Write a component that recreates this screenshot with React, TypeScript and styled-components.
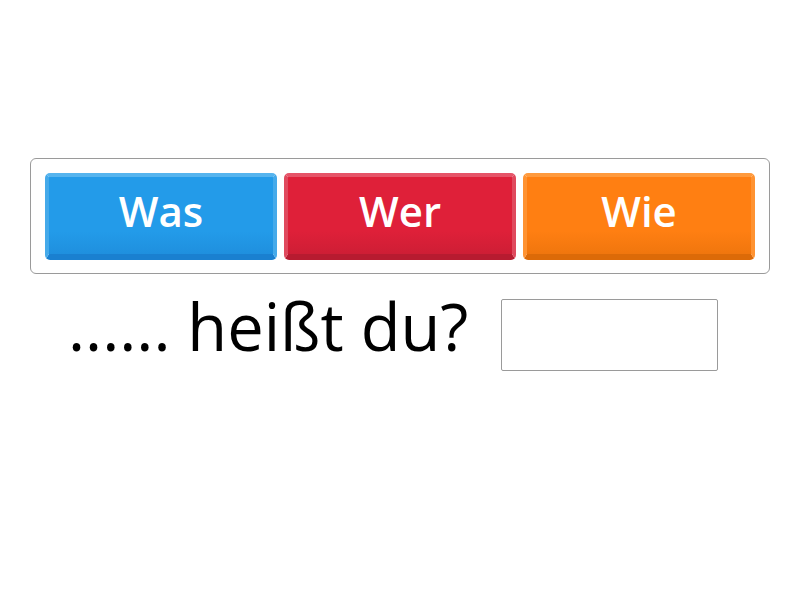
import styled, { createGlobalStyle } from "styled-components";

const GlobalStyle = createGlobalStyle`
  html, body {
    margin: 0;
    padding: 0;
    background: #ffffff;
  }
  body {
    font-family: "Open Sans", "Liberation Sans", sans-serif;
  }
`;

const Page = styled.div`
  width: 800px;
  height: 600px;
  display: flex;
  flex-direction: column;
  align-items: center;
  padding-top: 158px;
  box-sizing: border-box;
`;

const Tray = styled.div`
  width: 740px;
  height: 116px;
  box-sizing: border-box;
  border: 1px solid #9a9a9a;
  border-radius: 6px;
  padding: 14px 14px 13px;
  display: grid;
  grid-template-columns: repeat(3, 232px);
  gap: 7px;
`;

const palette = {
  blue: { top: "#56b4ee", main: "#239be9", bottom: "#1a80d0", edge: "#45aaea" },
  red: { top: "#e65468", main: "#df2039", bottom: "#b71b30", edge: "#e04a5e" },
  orange: { top: "#ff9a3d", main: "#ff7f12", bottom: "#dc6a08", edge: "#ff9332" },
};

type Tone = keyof typeof palette;

const Tile = styled.div<{ $tone: Tone }>`
  height: 87px;
  border-radius: 5px;
  box-sizing: border-box;
  background: linear-gradient(
    ${(p) => palette[p.$tone].main},
    ${(p) => palette[p.$tone].main} 70%,
    ${(p) => palette[p.$tone].bottom} 140%
  );
  border-top: 4px solid ${(p) => palette[p.$tone].top};
  border-left: 4px solid ${(p) => palette[p.$tone].edge};
  border-right: 4px solid ${(p) => palette[p.$tone].edge};
  border-bottom: 6px solid ${(p) => palette[p.$tone].bottom};
  display: flex;
  align-items: center;
  justify-content: center;
  color: #ffffff;
  font-size: 42px;
  font-weight: 600;
  padding-bottom: 11px;
`;

const Question = styled.div`
  width: 740px;
  margin-top: 25px;
  display: flex;
  align-items: flex-start;
  padding-left: 38px;
  box-sizing: border-box;
`;

const Sentence = styled.span`
  font-size: 65px;
  color: #000000;
  line-height: 54px;
  margin-right: 33px;
`;

const Blank = styled.div`
  width: 217px;
  height: 72px;
  box-sizing: border-box;
  border: 1px solid #9a9a9a;
  border-radius: 2px;
  background: #ffffff;
`;

const answers: { text: string; tone: Tone }[] = [
  { text: "Was", tone: "blue" },
  { text: "Wer", tone: "red" },
  { text: "Wie", tone: "orange" },
];

export default function App() {
  return (
    <>
      <GlobalStyle />
      <Page>
        <Tray>
          {answers.map((a) => (
            <Tile key={a.text} $tone={a.tone}>
              {a.text}
            </Tile>
          ))}
        </Tray>
        <Question>
          <Sentence>...... heißt du?</Sentence>
          <Blank />
        </Question>
      </Page>
    </>
  );
}
